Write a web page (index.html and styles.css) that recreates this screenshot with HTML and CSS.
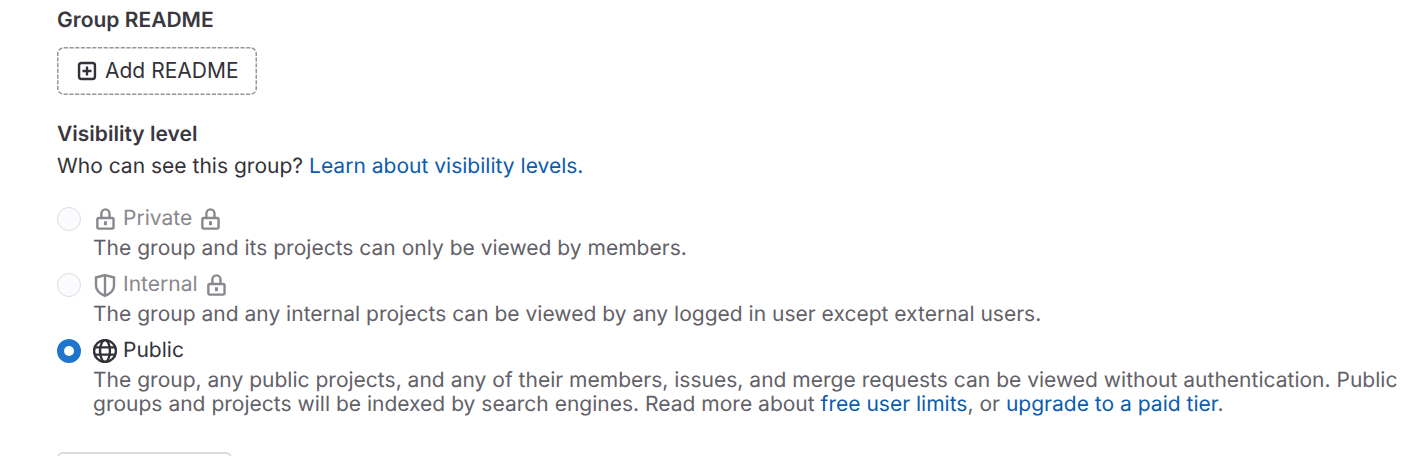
FILE: index.html
```html
<!DOCTYPE html>
<html lang="en">
<head>
    <meta charset="UTF-8">
    <title>Group settings</title>
    <link rel="stylesheet" href="styles.css">
</head>
<body>
    <div class="form-group readme-group">
        <h4 class="group-label">Group README</h4>
        <button class="add-readme" type="button">
            <svg class="dashes" width="200" height="48"><rect x="0.75" y="0.75" width="198.5" height="46.5" rx="6"/></svg>
            <svg class="icon icon-line" viewBox="0 0 16 16"><rect x="2.700" y="2.700" width="10.600" height="10.600" rx="1.600"/><path d="M8 5v6M5 8h6"/></svg>
            <span>Add README</span>
        </button>
    </div>

    <div class="form-group">
        <h4 class="group-label">Visibility level</h4>
        <p class="help">Who can see this group? <a href="#">Learn about visibility levels.</a></p>
    </div>

    <div class="options">
        <div class="option disabled">
            <span class="radio"></span>
            <div class="option-body">
                <div class="option-title">
                    <svg class="icon icon-line" viewBox="0 0 16 16"><use href="#lock"/></svg>
                    <span>Private</span>
                    <svg class="icon icon-line" viewBox="0 0 16 16"><use href="#lock"/></svg>
                </div>
                <p class="option-desc">The group and its projects can only be viewed by members.</p>
            </div>
        </div>

        <div class="option disabled">
            <span class="radio"></span>
            <div class="option-body">
                <div class="option-title">
                    <svg class="icon icon-line" viewBox="0 0 16 16"><path d="M8 1.400L14 3v5.500c0 3-2.500 5.300-6 6.700-3.500-1.400-6-3.700-6-6.700V3zM8 1.400v13.800"/></svg>
                    <span>Internal</span>
                    <svg class="icon icon-line" viewBox="0 0 16 16"><use href="#lock"/></svg>
                </div>
                <p class="option-desc">The group and any internal projects can be viewed by any logged in user except external users.</p>
            </div>
        </div>

        <div class="option">
            <span class="radio checked"></span>
            <div class="option-body">
                <div class="option-title">
                    <svg class="icon icon-line" viewBox="0 0 16 16"><circle cx="8" cy="8" r="7.300"/><ellipse cx="8" cy="8" rx="3.300" ry="7.300"/><path d="M1.200 5.600h13.600M1.200 10.400h13.600"/></svg>
                    <span>Public</span>
                </div>
                <p class="option-desc">The group, any public projects, and any of their members, issues, and merge requests can be viewed without authentication. Public groups and projects will be indexed by search engines. Read more about <a href="#">free user limits</a>, or <a href="#">upgrade to a paid tier</a>.</p>
            </div>
        </div>
    </div>

    <button class="submit-btn" type="button"></button>

    <svg class="defs" width="0" height="0">
        <symbol id="lock" viewBox="0 0 16 16"><rect x="2.900" y="7.300" width="10.800" height="7.100" rx="1"/><path d="M5.600 7.300V4.300a2.700 2.700 0 0 1 5.400 0v3"/><rect x="7.300" y="9.500" width="2" height="2.600" fill="currentColor" stroke="none"/></symbol>
    </svg>
</body>
</html>
```

FILE: styles.css
```css
* { box-sizing: border-box; }
html, body { height: 456px; overflow: hidden; }
body { margin: 0; padding: 9px 0 0 57px; font-family: Inter, "Liberation Sans", sans-serif; font-size: 21px; line-height: 24px; letter-spacing: .012px; color: #333238; background: #fff; text-rendering: geometricPrecision; }
a { color: #0b5cad; text-decoration: none; }
p { margin: 0; }

.group-label { margin: 0; font-size: 21px; line-height: 24px; font-weight: 600; color: #3a383f; }
.readme-group { margin-bottom: 28px; }

.add-readme { position: relative; display: flex; align-items: center; gap: 6px; width: 200px; height: 48px; margin-top: 14px; padding: 0 18px; background: #fff; border: 0; border-radius: 6px; font: inherit; letter-spacing: inherit; color: #333238; white-space: nowrap; }
.dashes { position: absolute; top: 0; left: 0; }
.dashes rect { fill: none; stroke: #97969b; stroke-width: 1.500; stroke-dasharray: 4.200 1.500; }
.icon { width: 24px; height: 24px; flex: none; fill: currentColor; }
.icon-line { fill: none; stroke: currentColor; stroke-width: 1.600; }
.defs { position: absolute; }

.help { margin-top: 8px; }

.options { margin-top: 28px; width: 1345px; }
.option { display: flex; margin-bottom: 12px; }
.radio { flex: none; width: 24px; height: 24px; margin-right: 12px; border: 1px solid #dcdcde; border-radius: 50%; background: #fbfafd; }
.radio.checked { background: #1f75cb; border: 7.500px solid #1f75cb; position: relative; }
.radio.checked::after { content: ""; position: absolute; inset: 0; background: #fff; border-radius: 50%; }
.option-body { flex: 1; }
.option-title { display: flex; align-items: center; gap: 6px; height: 24px; }
.option-desc { margin-top: 6px; color: #626168; }
.disabled .option-title { color: #89888d; }

.submit-btn { display: block; width: 175px; height: 48px; margin-top: 35px; background: #fff; border: 2px solid #dcdcde; border-radius: 6px; }
```
